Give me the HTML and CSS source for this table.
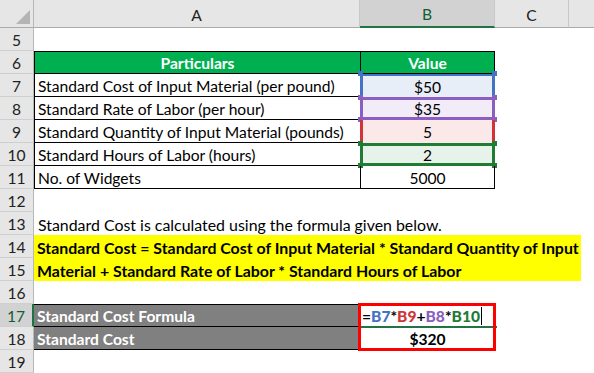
FILE: index.html
```html
<!DOCTYPE html>
<html>
<head>
<meta charset="utf-8">
<link rel="stylesheet" href="styles.css">
</head>
<body>
<div class="sheet">
  <div class="corner"><span class="tri"></span></div>
  <div class="colh">A</div>
  <div class="colh sel">B</div>
  <div class="colh">C</div>
  <div class="colh last"></div>

  <div class="rowh">5</div><div class="c"></div><div class="c"></div><div class="c"></div><div class="c"></div>

  <div class="rowh">6</div><div class="c th ta">Particulars</div><div class="c th tb">Value</div><div class="c"></div><div class="c"></div>

  <div class="rowh">7</div><div class="c ta">Standard Cost of Input Material (per pound)</div><div class="c tb ref blue">$50<i class="h tl"></i><i class="h tr"></i></div><div class="c"></div><div class="c"></div>

  <div class="rowh">8</div><div class="c ta">Standard Rate of Labor (per hour)</div><div class="c tb ref purple">$35<i class="h tl"></i><i class="h tr"></i><i class="h bl"></i><i class="h br"></i></div><div class="c"></div><div class="c"></div>

  <div class="rowh">9</div><div class="c ta">Standard Quantity of Input Material (pounds)</div><div class="c tb ref red">5</div><div class="c"></div><div class="c"></div>

  <div class="rowh">10</div><div class="c ta">Standard Hours of Labor (hours)</div><div class="c tb ref green">2<i class="h tl"></i><i class="h tr"></i><i class="h bl"></i><i class="h br"></i></div><div class="c"></div><div class="c"></div>

  <div class="rowh">11</div><div class="c ta">No. of Widgets</div><div class="c tb">5000</div><div class="c"></div><div class="c"></div>

  <div class="rowh">12</div><div class="c"></div><div class="c"></div><div class="c"></div><div class="c"></div>

  <div class="rowh">13</div><div class="c txt">Standard Cost is calculated using the formula given below.</div><div class="c"></div><div class="c"></div><div class="c"></div>

  <div class="rowh">14</div>
  <div class="merged"><div class="yellow">Standard Cost = Standard Cost of Input Material * Standard Quantity of Input Material + Standard Rate of Labor * Standard Hours of Labor</div></div>
  <div class="rowh">15</div>

  <div class="rowh">16</div><div class="c"></div><div class="c"></div><div class="c"></div><div class="c"></div>

  <div class="rowh sel">17</div><div class="c gray gtop">Standard Cost Formula</div><div class="c fx">=<b class="kb">B7</b>*<b class="kr">B9</b>+<b class="kp">B8</b>*<b class="kg">B10</b><span class="caret"></span><span class="act"></span><span class="redbox"></span></div><div class="c"></div><div class="c"></div>

  <div class="rowh">18</div><div class="c gray gbot">Standard Cost</div><div class="c res">$320</div><div class="c"></div><div class="c"></div>

  <div class="rowh">19</div><div class="c"></div><div class="c"></div><div class="c"></div><div class="c"></div>
</div>
</body>
</html>
```

FILE: styles.css
```css
html, body {
  margin: 0;
  padding: 0;
  background: #ffffff;
}
body {
  width: 594px;
  height: 373px;
  overflow: hidden;
  font-family: Lato, "Liberation Sans", Arial, sans-serif;
  font-size: 15.6px;
  color: #000;
}
.sheet {
  display: grid;
  grid-template-columns: 34px 326px 135px 74px 25px;
  grid-template-rows: 28px;
  grid-auto-rows: 23px;
}
.corner {
  background: #e6e6e6;
  border-right: 1px solid #b7b7b7;
  border-bottom: 1px solid #ababab;
  position: relative;
}
.tri {
  position: absolute;
  right: 3px;
  bottom: 3px;
  width: 0;
  height: 0;
  border-left: 14px solid transparent;
  border-bottom: 14px solid #b4b4b4;
}
.colh {
  background: #e6e6e6;
  border-right: 1px solid #c8c8c8;
  border-bottom: 1px solid #ababab;
  display: flex;
  align-items: center;
  justify-content: center;
  padding-top: 2px;
  font-size: 15.6px;
  color: #222;
}
.colh.sel {
  background: #d2d2d2;
  border-bottom: 2px solid #217346;
  color: #105e33;
}
.colh.last { border-right: none; }
.rowh {
  background: #e6e6e6;
  border-right: 1px solid #b7b7b7;
  border-bottom: 1px solid #cfcfcf;
  display: flex;
  align-items: center;
  justify-content: center;
  font-size: 15.6px;
  color: #222;
  padding-top: 1px;
}
.rowh.sel {
  background: #d2d2d2;
  border-right: 2px solid #217346;
  color: #105e33;
}
.c {
  position: relative;
  display: flex;
  align-items: center;
  white-space: nowrap;
  padding-top: 1px;
}
.ta {
  border-left: 1px solid #000;
  border-bottom: 1px solid #000;
  padding-left: 3px;
}
.tb {
  border-left: 1px solid #000;
  border-right: 1px solid #000;
  border-bottom: 1px solid #000;
  justify-content: center;
}
.th {
  background: #00b050;
  color: #fff;
  font-weight: bold;
  justify-content: center;
  border-top: 1px solid #000;
  padding-left: 0;
}
.txt {
  padding-left: 4px;
  font-size: 15.9px;
  overflow: visible;
}
.ref { border-width: 2px 3px; border-style: solid; margin: 0; border-bottom: none; }
.blue { background: #e8eef8; border-color: #4472c4; border-top-color: #4472c4; }
.purple { background: #f1ecf8; border-color: #8b5fc2; border-top: 3px solid #8b5fc2; border-bottom: 3px solid #8b5fc2; }
.red { background: #fbe9ea; border-color: #d13438; border-top: none; }
.green { background: #e7f2ea; border-color: #1e7d32; border-top: 3px solid #1e7d32; border-bottom: 3px solid #1e7d32; }
.h {
  position: absolute;
  width: 5px;
  height: 5px;
  background: inherit;
}
.blue .h { background: #4472c4; }
.purple .h { background: #8b5fc2; }
.green .h { background: #1e7d32; }
.tl { left: -5px; top: -5px; }
.tr { right: -5px; top: -5px; }
.bl { left: -5px; bottom: -5px; }
.br { right: -5px; bottom: -5px; }
.merged {
  grid-column: span 4;
  grid-row: span 2;
}
.yellow {
  width: 547px;
  height: 46px;
  background: #ffff00;
  font-weight: bold;
  font-size: 15.9px;
  white-space: normal;
  line-height: 23px;
  padding-left: 3px;
  padding-top: 1px;
  box-sizing: border-box;
}
.gray {
  background: #808080;
  color: #fff;
  font-weight: bold;
  padding-left: 3px;
  border-bottom: 1px solid #000;
}
.gtop { border-top: 1px solid #000; }
.fx {
  font-weight: bold;
  padding-left: 2px;
}
.kb { color: #4472c4; }
.kr { color: #d13438; }
.kp { color: #8b5fc2; }
.kg { color: #1e7d32; }
.caret {
  display: inline-block;
  width: 1px;
  height: 18px;
  background: #000;
  margin-left: 1px;
}
.act {
  position: absolute;
  left: 0;
  right: -2px;
  bottom: -1px;
  height: 2px;
  background: #217346;
}
.redbox {
  position: absolute;
  left: -2px;
  top: -1px;
  width: 138px;
  height: 48px;
  box-sizing: border-box;
  border: 3px solid #ff0000;
  z-index: 2;
}
.res {
  font-weight: bold;
  justify-content: center;
}
```
